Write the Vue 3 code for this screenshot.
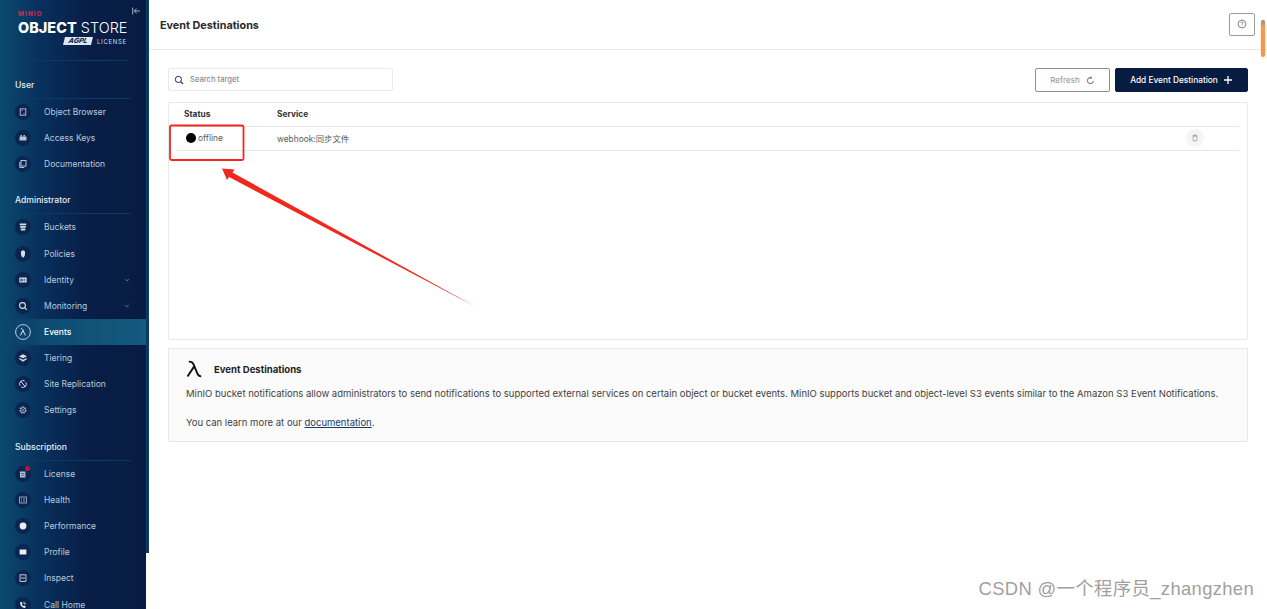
<script setup>
const sections = [
  { title: 'User', items: [
    { label: 'Object Browser', icon: 'browser' },
    { label: 'Access Keys', icon: 'keys' },
    { label: 'Documentation', icon: 'docs' },
  ]},
  { title: 'Administrator', items: [
    { label: 'Buckets', icon: 'buckets' },
    { label: 'Policies', icon: 'policies' },
    { label: 'Identity', icon: 'identity', chevron: true },
    { label: 'Monitoring', icon: 'monitoring', chevron: true },
    { label: 'Events', icon: 'lambda', active: true },
    { label: 'Tiering', icon: 'tiering' },
    { label: 'Site Replication', icon: 'replication' },
    { label: 'Settings', icon: 'settings' },
  ]},
  { title: 'Subscription', items: [
    { label: 'License', icon: 'license', badge: true },
    { label: 'Health', icon: 'health' },
    { label: 'Performance', icon: 'performance' },
    { label: 'Profile', icon: 'profile' },
    { label: 'Inspect', icon: 'inspect' },
    { label: 'Call Home', icon: 'call' },
  ]},
]
</script>

<template>
  <div class="page">
    <aside class="sidebar">
      <div class="sidebar-inner">
        <div class="brand">
          <svg class="collapse" viewBox="0 0 8 8" width="8" height="8"><path d="M.7 .5v7M7.8 4H2.2M4.6 1.8 2.2 4l2.4 2.2" fill="none" stroke="#c9d6e2" stroke-width=".8"/></svg>
          <div class="minio">MINIO</div>
          <div class="product"><b>OBJECT</b> STORE</div>
          <div class="license-line"><span class="agpl">AGPL</span><span class="license-word">LICENSE</span></div>
        </div>
        <section v-for="s in sections" :key="s.title" class="nav-section">
          <h3>{{ s.title }}</h3>
          <div v-for="item in s.items" :key="item.label" class="nav-row" :class="{ active: item.active }">
            <span class="nav-icon">
              <svg viewBox="0 0 16 16" width="16" height="16">
                <g v-if="item.icon === 'browser'" fill="none" stroke="#b4c5d4" stroke-width=".9"><rect x="5.2" y="4.8" width="5.6" height="6.4"/><path d="M6.5 6.5h1M8.5 9.5h1"/></g>
                <g v-else-if="item.icon === 'keys'" fill="#b4c5d4"><rect x="4.5" y="6.5" width="7" height="4" rx=".5"/><rect x="5.5" y="5" width="1.5" height="1.5"/><rect x="8.5" y="5" width="1.5" height="1.5"/></g>
                <g v-else-if="item.icon === 'docs'" fill="none" stroke="#b4c5d4" stroke-width="1"><rect x="6" y="4.5" width="5" height="5.5"/><path d="M4.8 6v5.5h4.5"/></g>
                <path v-else-if="item.icon === 'buckets'" d="M4.8 4.5h6.4v1.8H4.8zM5.2 7h5.6v1.8H5.2zM5.6 9.5h4.8l-.3 2H5.9z" fill="#d5e0e9"/>
                <path v-else-if="item.icon === 'policies'" d="M8 4.2 10 5.2v2.6c0 2-.8 3.2-2 3.9-1.2-.7-2-1.9-2-3.9V5.2z" fill="#d5e0e9"/>
                <g v-else-if="item.icon === 'identity'"><rect x="4.3" y="5.6" width="7.4" height="5" rx=".6" fill="#d5e0e9"/><path d="M5.6 7.2h1.6v1.8H5.6zM8.4 7.4h2M8.4 8.8h2" stroke="#0a2a55" stroke-width=".7" fill="none"/></g>
                <g v-else-if="item.icon === 'monitoring'" fill="none" stroke="#d5e0e9" stroke-width="1.1"><circle cx="7.5" cy="7.5" r="2.9"/><path d="M9.7 9.7 11.8 11.8"/></g>
                <g v-else-if="item.icon === 'lambda'"><circle cx="8" cy="8" r="7.4" fill="none" stroke="#e6eef4" stroke-width=".8"/><path d="M5.4 11.4 7.9 6.6M5.9 4.6c1.4 0 1.7.5 2.2 1.7l1.4 3.6c.3.8.6 1.2 1.2 1.2" fill="none" stroke="#fff" stroke-width=".9"/></g>
                <g v-else-if="item.icon === 'tiering'" fill="#d5e0e9"><path d="M8 4.3 12 6.3 8 8.3 4 6.3z"/><path d="M4.4 8 8 9.8 11.6 8 12 9 8 11.7 4 9z"/></g>
                <g v-else-if="item.icon === 'replication'" fill="none" stroke="#d5e0e9" stroke-width="1"><path d="M5 9.6A3.4 3.4 0 0 1 9.7 5M11 6.5A3.4 3.4 0 0 1 6.3 11"/><path d="M5.5 5 10.5 11"/></g>
                <g v-else-if="item.icon === 'settings'" fill="none" stroke="#b4c5d4"><circle cx="8" cy="8" r="2.7" stroke-width="1.6" stroke-dasharray="1.6 .7"/><circle cx="8" cy="8" r=".9" stroke-width=".6"/></g>
                <g v-else-if="item.icon === 'license'"><rect x="5" y="5.5" width="5.4" height="6" fill="#b4c5d4"/><path d="M6 7.5h3.4M6 9.3h3.4" stroke="#0a2a55" stroke-width=".6"/></g>
                <g v-else-if="item.icon === 'health'" fill="none" stroke="#b4c5d4" stroke-width=".8"><rect x="4.6" y="5" width="6.8" height="6"/><path d="M6 7h1M8 7h2M6 9h1M8 9h2"/></g>
                <circle v-else-if="item.icon === 'performance'" cx="8" cy="8" r="3.4" fill="#e6eef4"/>
                <rect v-else-if="item.icon === 'profile'" x="4.6" y="5.4" width="6.8" height="5.2" rx=".4" fill="#e6eef4"/>
                <g v-else-if="item.icon === 'inspect'" fill="none" stroke="#d5e0e9" stroke-width=".9"><path d="M5 7V4.8h6V7M5 9v2.4h6V9M4.2 8h7.6"/></g>
                <g v-else-if="item.icon === 'call'"><path d="M5 5.4c0 3 2 5.2 5 5.6l.9-1.6-1.8-1-.8.7c-.7-.4-1.2-1-1.5-1.6l.7-.9-1-1.8z" fill="#e6eef4"/><path d="M9 4.6v2.2h2.2" stroke="#e6eef4" stroke-width=".8" fill="none"/></g>
              </svg>
              <i v-if="item.badge" class="badge"></i>
            </span>
            <span class="nav-label">{{ item.label }}</span>
            <span v-if="item.chevron" class="chevron">
              <svg viewBox="0 0 8 8" width="8" height="8"><path d="M2.4 3.2 4 4.8 5.6 3.2" fill="none" stroke="#8fa6bb" stroke-width=".7"/></svg>
            </span>
          </div>
        </section>
      </div>
      <div class="sidebar-edge"></div>
    </aside>

    <main class="main">
      <header class="topbar">
        <h1>Event Destinations</h1>
        <button class="help">
          <svg viewBox="0 0 10 10" width="10" height="10"><circle cx="5" cy="5" r="3.9" fill="none" stroke="#666" stroke-width=".8"/><path d="M3.8 4c.1-.8.6-1.1 1.2-1.1.7 0 1.2.4 1.2 1 0 .9-1.2.9-1.2 1.8M5 6.6v.7" fill="none" stroke="#666" stroke-width=".7"/></svg>
        </button>
      </header>

      <div class="content">
        <div class="actions">
          <label class="search">
            <svg viewBox="0 0 10 10" width="10" height="10"><circle cx="4.4" cy="4.4" r="3.1" fill="none" stroke="#1b2f52" stroke-width="1"/><path d="M6.7 6.7 9 9" stroke="#1b2f52" stroke-width="1.1"/></svg>
            <span>Search target</span>
          </label>
          <div class="buttons">
            <button class="btn-refresh">Refresh
              <svg viewBox="0 0 10 10" width="9" height="9"><path d="M8.3 5.4A3.4 3.4 0 1 1 5 1.7" fill="none" stroke="#555" stroke-width="1"/><path d="M4.6 .2 7 1.8 4.6 3.4z" fill="#555" transform="rotate(20 5 2)"/></svg>
            </button>
            <button class="btn-add">Add Event Destination
              <svg viewBox="0 0 10 10" width="10" height="10"><path d="M5 1v8M1 5h8" stroke="#fff" stroke-width="1.3"/></svg>
            </button>
          </div>
        </div>

        <div class="table-box">
          <div class="t-row t-head">
            <span class="col-status">Status</span>
            <span class="col-service">Service</span>
          </div>
          <div class="t-row t-body">
            <span class="col-status status-cell"><i class="dot"></i>offline</span>
            <span class="col-service">webhook:同步文件</span>
            <span class="delete">
              <svg viewBox="0 0 10 10" width="8" height="8"><path d="M2.6 2.6h4.8v6H2.6zM1.8 2.1h6.4M4 1h2" fill="none" stroke="#8a8a8a" stroke-width=".8"/></svg>
            </span>
          </div>
        </div>

        <div class="info-box">
          <div class="info-title">
            <svg viewBox="0 0 18 18" width="18" height="18"><path d="M1.5 16.5 8.2 6.4M2.8 1.6c3.4 0 4 .9 5.1 3.6l3.4 8.2c.8 2 1.6 3 3.9 3" fill="none" stroke="#111" stroke-width="1.9"/></svg>
            <b>Event Destinations</b>
          </div>
          <p class="p1">MinIO bucket notifications allow administrators to send notifications to supported external services on certain object or bucket events. MinIO supports bucket and object-level S3 events similar to the Amazon S3 Event Notifications.</p>
          <p class="p2">You can learn more at our <a>documentation</a>.</p>
        </div>
      </div>
    </main>

    <div class="scroll-thumb"></div>

    <svg class="annotation" width="1267" height="609" viewBox="0 0 1267 609">
      <rect x="170" y="125.5" width="73.5" height="34.5" rx="1.5" fill="none" stroke="#f0281e" stroke-width="1.8"/>
      <path d="M222 168.5 234.5 169.5 232.5 172.5 476 307 229 177 227 180z" fill="#f0281e"/>
    </svg>

    <div class="watermark">CSDN @一个程序员_zhangzhen</div>
  </div>
</template>

<style>
html, body { margin: 0; background: #fff; overflow: hidden; }
</style>

<style scoped>
.page {
  position: relative;
  width: 1267px;
  height: 609px;
  overflow: hidden;
  display: flex;
  font-family: Inter, "Noto Sans CJK SC", sans-serif;
  color: #333;
  background: #fff;
}
.sidebar {
  width: 149px;
  flex: none;
  display: flex;
  height: 609px;
  overflow: hidden;
}
.sidebar-inner {
  width: 146px;
  height: 609px;
  flex: none;
  overflow: hidden;
  background: linear-gradient(90deg, #0a4a70 0%, #08305c 28%, #081e47 60%, #081c42 100%);
  color: #fff;
}
.sidebar-edge {
  width: 3px;
  height: 553px;
  background: #0b3a62;
}
.brand {
  position: relative;
  height: 61px;
  margin: 0 18px;
  border-bottom: 1px solid #0c3a62;
  box-sizing: border-box;
  padding-top: 11px;
}
.collapse { position: absolute; left: 114px; top: 7px; }
.minio {
  font-size: 6.2px;
  line-height: 6px;
  font-weight: 700;
  letter-spacing: 1.2px;
  color: #d32f4c;
}
.product {
  font-size: 14.4px;
  line-height: 15px;
  margin-top: 3px;
  white-space: nowrap;
  font-weight: 300;
  letter-spacing: .05px;
}
.product b { font-weight: 800; }
.license-line {
  display: flex;
  align-items: center;
  margin-top: 2px;
  padding-left: 46px;
  white-space: nowrap;
}
.agpl {
  width: 28px;
  height: 8px;
  font-size: 7px;
  line-height: 8px;
  font-weight: 800;
  font-style: italic;
  color: #12305a;
  background: #dfe6ec;
  text-align: center;
  transform: skewX(-14deg);
  overflow: hidden;
}
.license-word {
  margin-left: 5px;
  font-size: 6px;
  letter-spacing: .7px;
  color: #d5dfe8;
}
.nav-section h3 {
  margin: 18.5px 15px 0;
  padding-bottom: 7px;
  height: 11px;
  font-size: 8.6px;
  line-height: 11px;
  font-weight: 500;
  color: #e6edf3;
  border-bottom: 1px solid #0c3a62;
}
.nav-row {
  height: 26.14px;
  display: flex;
  align-items: center;
  padding: 0 15px;
  box-sizing: border-box;
  color: #b9cadb;
  font-size: 8.5px;
}
.nav-row.active {
  background: linear-gradient(90deg, rgba(14, 80, 116, 0) 0%, #0d4b72 30%, #155a80 100%);
  color: #fff;
  font-weight: 500;
}
.nav-icon {
  position: relative;
  width: 16px;
  height: 16px;
  flex: none;
  border-radius: 50%;
  background: #0a2650;
  margin-right: 13px;
  display: flex;
}
.active .nav-icon { background: transparent; }
.badge {
  position: absolute;
  right: 1px;
  top: 0;
  width: 5px;
  height: 5px;
  border-radius: 50%;
  background: #c8102e;
}
.nav-label { flex: 1; white-space: nowrap; }
.chevron {
  width: 9px;
  height: 9px;
  background: #0a1f44;
  display: flex;
  align-items: center;
  justify-content: center;
}
.main { flex: 1; min-width: 0; display: flex; flex-direction: column; }
.topbar {
  height: 50px;
  box-sizing: border-box;
  flex: none;
  border-bottom: 1px solid #eaeaea;
  display: flex;
  align-items: center;
  justify-content: space-between;
  padding: 0 12px 0 11px;
}
.topbar h1 {
  margin: 1px 0 0;
  font-size: 10.8px;
  font-weight: 700;
  color: #2b2b2b;
}
.help {
  width: 26px;
  height: 23px;
  padding: 0;
  margin-bottom: 1px;
  border: 1px solid #9a9a9a;
  border-radius: 2px;
  background: #fff;
  display: flex;
  align-items: center;
  justify-content: center;
}
.content { padding: 18px 19px 0; }
.actions {
  display: flex;
  justify-content: space-between;
  align-items: flex-start;
  height: 24px;
}
.search {
  width: 225px;
  height: 23px;
  box-sizing: border-box;
  border: 1px solid #eaeaea;
  border-radius: 2px;
  display: flex;
  align-items: center;
  gap: 6px;
  padding-left: 5px;
  font-size: 7.6px;
  font-weight: 500;
  color: #8b8b8b;
}
.buttons { display: flex; gap: 5px; }
.btn-refresh, .btn-add {
  height: 24px;
  box-sizing: border-box;
  border-radius: 2px;
  font-family: inherit;
  display: flex;
  align-items: center;
  justify-content: center;
  padding: 0;
}
.btn-refresh {
  width: 75px;
  gap: 6px;
  font-size: 8.1px;
  background: #fff;
  border: 1px solid #8f8f8f;
  color: #8c949c;
}
.btn-add {
  width: 133px;
  gap: 5px;
  font-size: 8.3px;
  background: #081c42;
  border: 1px solid #081c42;
  color: #fff;
  font-weight: 500;
}
.table-box {
  margin-top: 10px;
  height: 238px;
  box-sizing: border-box;
  border: 1px solid #e8e8e8;
  border-radius: 2px;
  padding: 0 8px;
}
.t-row {
  height: 23px;
  display: flex;
  align-items: center;
  font-size: 8.4px;
  border-bottom: 1px solid #e8e8e8;
  padding-bottom: 1px;
  box-sizing: border-box;
}
.t-head { height: 24px; font-weight: 700; color: #333; }
.t-body { height: 24px; color: #5a5a5a; position: relative; padding-bottom: 2px; }
.col-status { width: 100px; padding-left: 7px; box-sizing: border-box; flex: none; }
.col-service { flex: 1; }
.status-cell { display: flex; align-items: center; padding-left: 9px; gap: 2px; }
.dot { width: 10px; height: 10px; border-radius: 50%; background: #000; display: block; }
.delete {
  position: absolute;
  right: 35px;
  top: 2px;
  width: 18px;
  height: 18px;
  border-radius: 50%;
  background: #f5f5f5;
  display: flex;
  align-items: center;
  justify-content: center;
}
.info-box {
  margin-top: 8px;
  height: 94px;
  box-sizing: border-box;
  border: 1px solid #e8e8e8;
  background: #fbfbfb;
  padding: 11px 17px 0;
  font-size: 9.5px;
  color: #3f3f3f;
}
.info-title {
  display: flex;
  align-items: center;
  gap: 10px;
  height: 18px;
}
.info-title b { font-size: 9.55px; color: #1e1e1e; font-weight: 700; }
.p1 { margin: 9px 0 0; line-height: 13px; white-space: nowrap; }
.p2 { margin: 16px 0 0; line-height: 13px; }
.p2 a { color: #1c3a68; text-decoration: underline; }
.scroll-thumb {
  position: absolute;
  left: 1261px;
  top: 20px;
  width: 4px;
  height: 37px;
  border-radius: 2px;
  background: linear-gradient(180deg, #8d8d8d 0%, #f59a50 18%, #f99246 100%);
  box-shadow: 0 0 2px rgba(249, 146, 70, .5);
}
.annotation { position: absolute; left: 0; top: 0; pointer-events: none; }
.watermark {
  position: absolute;
  right: 13px;
  top: 578px;
  font-family: "Liberation Sans", "Noto Sans CJK SC", sans-serif;
  font-size: 18.4px;
  letter-spacing: .35px;
  line-height: 22px;
  color: #a0a0a0;
  white-space: nowrap;
}
</style>
